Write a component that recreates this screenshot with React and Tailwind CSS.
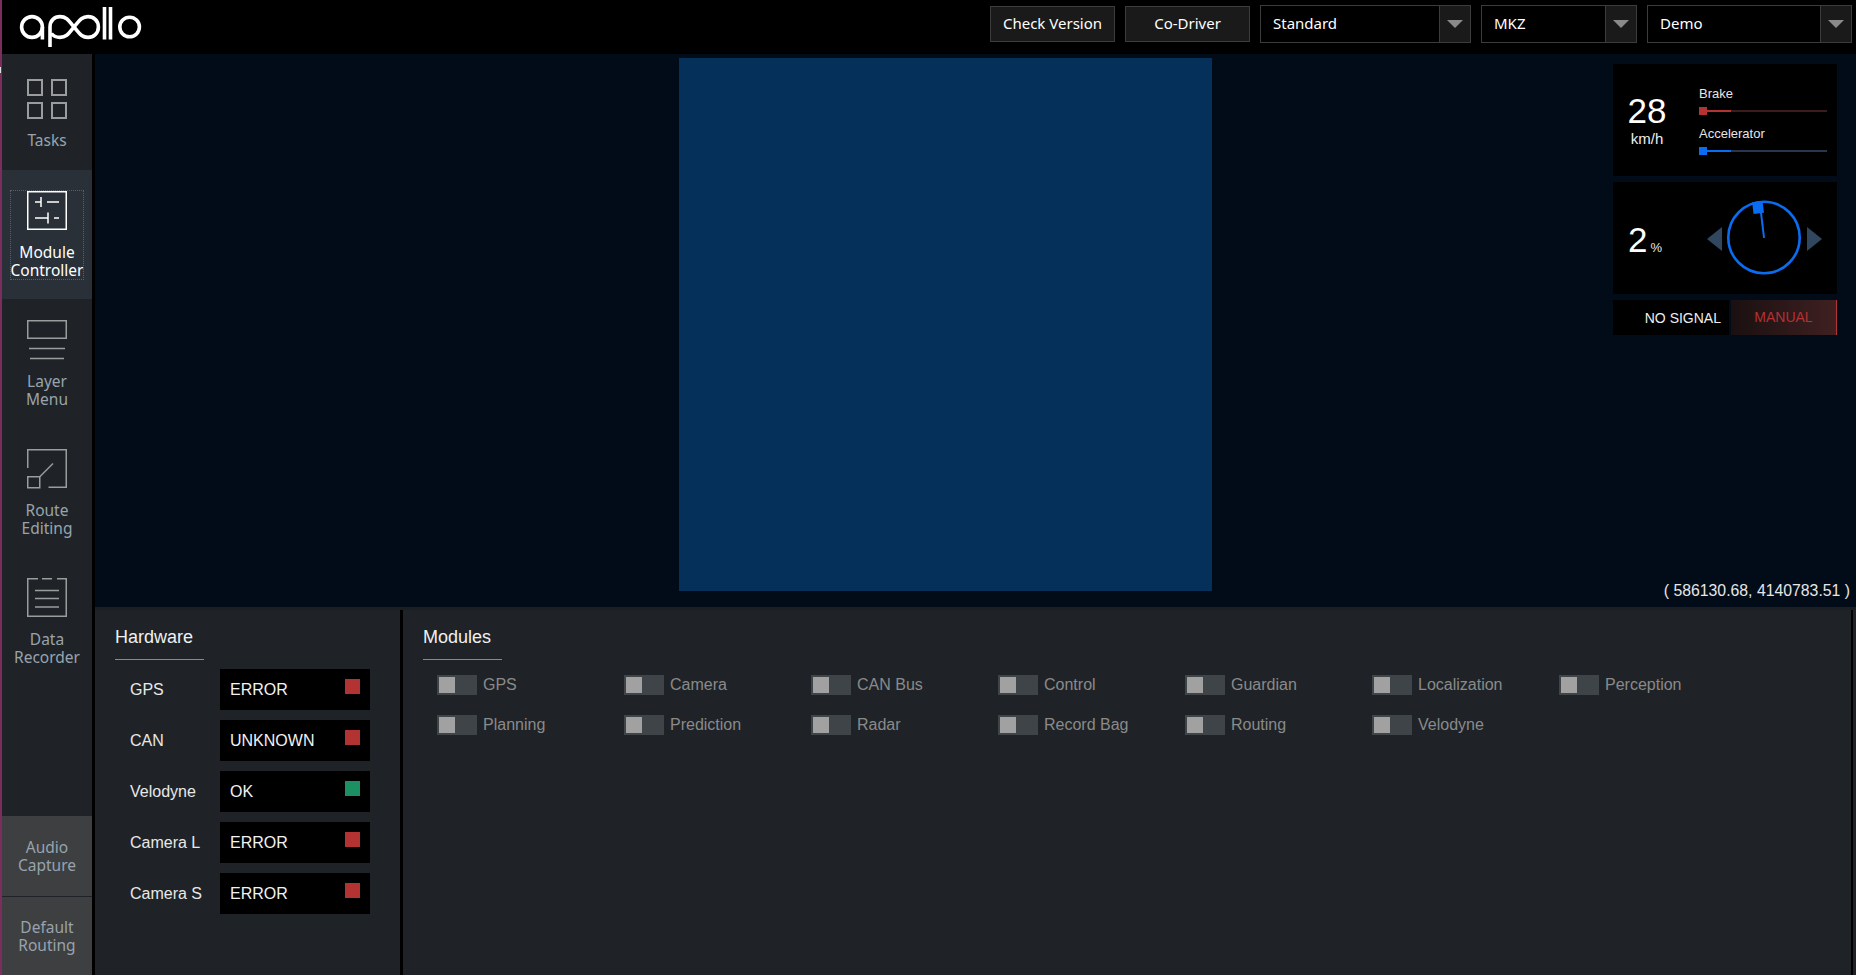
const hardware = [
  { name: 'GPS', status: 'ERROR', ok: false },
  { name: 'CAN', status: 'UNKNOWN', ok: false },
  { name: 'Velodyne', status: 'OK', ok: true },
  { name: 'Camera L', status: 'ERROR', ok: false },
  { name: 'Camera S', status: 'ERROR', ok: false },
];

const modules = [
  'GPS', 'Camera', 'CAN Bus', 'Control', 'Guardian', 'Localization', 'Perception',
  'Planning', 'Prediction', 'Radar', 'Record Bag', 'Routing', 'Velodyne',
];

function Logo() {
  return (
    <svg width="150" height="54" viewBox="0 0 150 54" fill="none" stroke="#fff" strokeWidth="3.6" className="ml-[-2px] block">
      <circle cx="32" cy="27" r="10.4" />
      <path d="M42.4 27V39.5" />
      <path d="M50 47V27C50 20.5 54.5 16.6 60 16.6C67.5 16.6 69.5 22 74 27C78.5 32 81 37.4 88 37.4C93.5 37.4 98.4 33.5 98.4 27C98.4 20.5 93.5 16.6 88 16.6C81 16.6 78.5 22 74 27C69.5 32 67.5 37.4 60 37.4C56.5 37.4 53.5 36 51.5 33.5" />
      <path d="M104.5 7V39.5M110.5 7V39.5" />
      <circle cx="129.6" cy="27" r="9.8" />
    </svg>
  );
}

function TasksIcon() {
  return (
    <svg width="40" height="40" viewBox="0 0 40 40" fill="none" stroke="#9a9c9e" strokeWidth="2" className="block">
      <rect x="1" y="1" width="14" height="15" />
      <rect x="25" y="1" width="14" height="15" />
      <rect x="1" y="24" width="14" height="15" />
      <rect x="25" y="24" width="14" height="15" />
    </svg>
  );
}

function ModuleIcon() {
  return (
    <svg width="40" height="40" viewBox="0 0 40 40" fill="none" stroke="#fff" strokeWidth="1.5" className="block">
      <rect x="0.75" y="0.75" width="38.5" height="37.5" />
      <path d="M8 11H14M14 6V16M20 11H32" />
      <path d="M8 27H21M21 21.5V32.5M27 27H32" />
    </svg>
  );
}

function LayerIcon() {
  return (
    <svg width="40" height="40" viewBox="0 0 40 40" fill="none" stroke="#9a9c9e" strokeWidth="1.5" className="block">
      <rect x="0.75" y="0.75" width="38.5" height="17.5" />
      <path d="M2 28.5H38M3 38.5H37" />
    </svg>
  );
}

function RouteIcon() {
  return (
    <svg width="40" height="40" viewBox="0 0 40 40" fill="none" stroke="#9a9c9e" strokeWidth="1.5" className="block">
      <path d="M0.75 19V0.75H39.25V38.25H21.5" />
      <rect x="0.75" y="27.75" width="12" height="11" />
      <path d="M12.75 27.75L26 14.5" />
    </svg>
  );
}

function RecorderIcon() {
  return (
    <svg width="40" height="40" viewBox="0 0 40 40" fill="none" stroke="#9a9c9e" strokeWidth="1.5" className="block">
      <path d="M11 0.75H0.75V38.25H39.25V0.75H30M15 0.75H25" />
      <path d="M8 12.5H32M8 20.5H32M8 29H32" />
    </svg>
  );
}

function NavItem({ icon, label, active, height, top }) {
  return (
    <div className={`flex flex-col items-center shrink-0 ${height} ${top} ${active ? 'bg-[#2a3037]' : ''}`}>
      <div className="relative flex flex-col items-center">
        {active && <div className="absolute left-[-1px] right-[-1px] top-[-1px] bottom-[-1px] border border-dotted border-[#5c5f63]" />}
        {icon}
        <div className={`mt-[12px] text-center text-[15.5px] leading-[18px] whitespace-pre-line ${active ? 'text-white' : 'text-[#98a3ad]'}`}>
          {label}
        </div>
      </div>
    </div>
  );
}

function ActionItem({ label, height }) {
  return (
    <div className={`flex items-center justify-center shrink-0 bg-[#3e3f41] text-center text-[15.5px] leading-[18px] text-[#98a3ad] whitespace-pre-line ${height}`}>
      {label}
    </div>
  );
}

function HeaderButton({ label }) {
  return (
    <div className="mt-[1px] flex h-[36px] w-[125px] items-center justify-center border border-[#3c3c3c] bg-[#1a1a1a] pb-[2px] text-[15px] text-white">
      {label}
    </div>
  );
}

function HeaderSelect({ label, width }) {
  return (
    <div className={`flex h-[38px] border border-[#3c3c3c] bg-black text-[15px] text-white ${width}`}>
      <div className="flex flex-1 items-center pb-[2px] pl-[12px]">{label}</div>
      <div className="flex w-[31px] items-center justify-center border-l border-[#3c3c3c] bg-[#1a1a1a]">
        <div className="h-0 w-0 border-x-[8px] border-t-[8px] border-x-transparent border-t-[#8a8a8a]" />
      </div>
    </div>
  );
}

function Slider({ fill, knob, track }) {
  return (
    <div className={`relative h-[2px] w-[128px] ${track}`}>
      <div className={`absolute left-0 top-0 h-[2px] w-[32px] ${fill}`} />
      <div className={`absolute left-0 top-[-3px] h-[8px] w-[8px] ${knob}`} />
    </div>
  );
}

function Wheel() {
  return (
    <svg width="120" height="80" viewBox="0 0 120 80" className="mt-[3px] block">
      <path d="M0 39L15 27V51Z" fill="#31475f" />
      <path d="M100 27L115 39L100 51Z" fill="#31475f" />
      <circle cx="57" cy="37.5" r="35.7" fill="none" stroke="#0a6cf0" strokeWidth="2.6" />
      <g transform="rotate(-7 57 37.5)">
        <rect x="49.5" y="1" width="10.5" height="12" fill="#0a6cf0" />
        <rect x="56" y="12" width="2" height="26" fill="#0a6cf0" />
      </g>
    </svg>
  );
}

function Dashboard() {
  return (
    <div className="absolute right-[19px] top-[10px] flex w-[224px] flex-col font-['Liberation_Sans',sans-serif] text-white">
      <div className="flex h-[112px] bg-black">
        <div className="flex w-[68px] flex-col items-center pt-[27px]">
          <div className="text-[35px] leading-[40px]">28</div>
          <div className="mt-[-1px] text-[15px] leading-[18px] text-[#eeeeee]">km/h</div>
        </div>
        <div className="ml-[18px] pt-[22px]">
          <div className="text-[13px] leading-[16px] text-[#e6e6e6]">Brake</div>
          <div className="mt-[8px]"><Slider fill="bg-[#b33232]" knob="bg-[#b33232]" track="bg-[#3a1e1e]" /></div>
          <div className="mt-[14px] text-[13px] leading-[16px] text-[#e6e6e6]">Accelerator</div>
          <div className="mt-[8px]"><Slider fill="bg-[#0a6cf0]" knob="bg-[#0a6cf0]" track="bg-[#2a3650]" /></div>
        </div>
      </div>
      <div className="mt-[6px] flex h-[112px] items-center bg-black">
        <div className="flex w-[94px] items-baseline pl-[15px] pt-[3px]">
          <span className="text-[35px] leading-[40px]">2</span>
          <span className="ml-[3px] text-[13px] leading-[16px] text-[#e6e6e6]">%</span>
        </div>
        <Wheel />
      </div>
      <div className="mt-[6px] flex h-[35px] gap-[2px] text-[14px]">
        <div className="flex w-[116px] items-center justify-end bg-black pr-[8px] pt-[1px] text-[#eeeeee]">NO SIGNAL</div>
        <div className="flex flex-1 items-center justify-center border-r border-[#b33232] bg-gradient-to-r from-[#1a1011] to-[#402021] text-[#b33232]">MANUAL</div>
      </div>
    </div>
  );
}

function PanelTitle({ children }) {
  return (
    <div className="inline-block border-b border-[#8a8a8a] pr-[11px] text-[18px] leading-[24px] pb-[10px] text-[#f0f0f0]">
      {children}
    </div>
  );
}

function Toggle({ label }) {
  return (
    <div className="flex h-[20px] w-[187px] items-center">
      <div className="flex h-[20px] w-[40px] items-center bg-[#3f4449] pl-[2px]">
        <div className="h-[16px] w-[16px] bg-[#a1a1a1]" />
      </div>
      <span className="ml-[6px] text-[16px] text-[#8a8a8a]">{label}</span>
    </div>
  );
}

export default function App() {
  return (
    <div className="relative flex h-[975px] w-[1856px] overflow-hidden bg-black font-['Liberation_Sans',sans-serif]">
      <div className="w-[2px] shrink-0 bg-[#7b2d5e]" />
      <div className="absolute left-0 top-[67px] h-[6px] w-[1px] bg-[#dddddd]" />
      <div className="flex flex-1 flex-col">
        <header className="flex h-[54px] shrink-0 items-start bg-black pr-[4px] font-['Noto_Sans',sans-serif]">
          <Logo />
          <div className="ml-auto mt-[5px] flex items-start gap-[10px]">
            <HeaderButton label="Check Version" />
            <HeaderButton label="Co-Driver" />
            <HeaderSelect label="Standard" width="w-[211px]" />
            <HeaderSelect label="MKZ" width="w-[156px]" />
            <HeaderSelect label="Demo" width="w-[205px]" />
          </div>
        </header>
        <div className="flex flex-1">
          <aside className="flex w-[90px] shrink-0 flex-col bg-[#1f2327] font-['Noto_Sans',sans-serif]">
            <NavItem icon={<TasksIcon />} label="Tasks" height="h-[116px]" top="pt-[25px]" />
            <NavItem icon={<ModuleIcon />} label={'Module\nController'} active height="h-[129px]" top="pt-[21px]" />
            <NavItem icon={<LayerIcon />} label={'Layer\nMenu'} height="h-[129px]" top="pt-[21px]" />
            <NavItem icon={<RouteIcon />} label={'Route\nEditing'} height="h-[129px]" top="pt-[21px]" />
            <NavItem icon={<RecorderIcon />} label={'Data\nRecorder'} height="h-[129px]" top="pt-[21px]" />
            <div className="flex-1" />
            <ActionItem label={'Audio\nCapture'} height="h-[80px]" />
            <div className="h-[1px] shrink-0 bg-[#1f2327]" />
            <ActionItem label={'Default\nRouting'} height="h-[78px]" />
          </aside>
          <main className="ml-[3px] flex flex-1 flex-col">
            <section className="relative h-[553px] shrink-0 bg-[#020c18] pl-[584px] pt-[4px]">
              <div className="h-[533px] w-[533px] bg-[#05305a]" />
              <Dashboard />
              <div className="absolute right-[6px] top-[528px] text-[15.8px] leading-[18px] text-[#e6e6e6]">
                ( 586130.68, 4140783.51 )
              </div>
            </section>
            <section className="flex flex-1 border-t-[3px] border-[#1a1f23]">
              <div className="w-[305px] shrink-0 bg-[#1f2327] pl-[20px] pt-[15px]">
                <PanelTitle>Hardware</PanelTitle>
                <div className="mt-[9px] flex flex-col gap-[10px]">
                  {hardware.map((item) => (
                    <div key={item.name} className="flex h-[41px] items-center">
                      <div className="w-[105px] pl-[15px] text-[16px] text-[#e8e8e8]">{item.name}</div>
                      <div className="flex h-[41px] w-[150px] items-center justify-between bg-black pl-[10px] pr-[10px] text-[16px] text-[#f2f2f2]">
                        <span>{item.status}</span>
                        <span className={`mb-[7px] h-[15px] w-[15px] ${item.ok ? 'bg-[#1c9063]' : 'bg-[#b33232]'}`} />
                      </div>
                    </div>
                  ))}
                </div>
              </div>
              <div className="w-[3px] shrink-0 bg-black" />
              <div className="w-[1448px] shrink-0 bg-[#1f2327] pl-[20px] pt-[15px]">
                <PanelTitle>Modules</PanelTitle>
                <div className="mt-[15px] grid grid-cols-[repeat(7,187px)] gap-y-[20px] pl-[14px]">
                  {modules.map((name) => (
                    <Toggle key={name} label={name} />
                  ))}
                </div>
              </div>
              <div className="w-[2px] shrink-0 bg-black" />
              <div className="flex-1 bg-[#1f2327]" />
            </section>
          </main>
        </div>
      </div>
    </div>
  );
}
